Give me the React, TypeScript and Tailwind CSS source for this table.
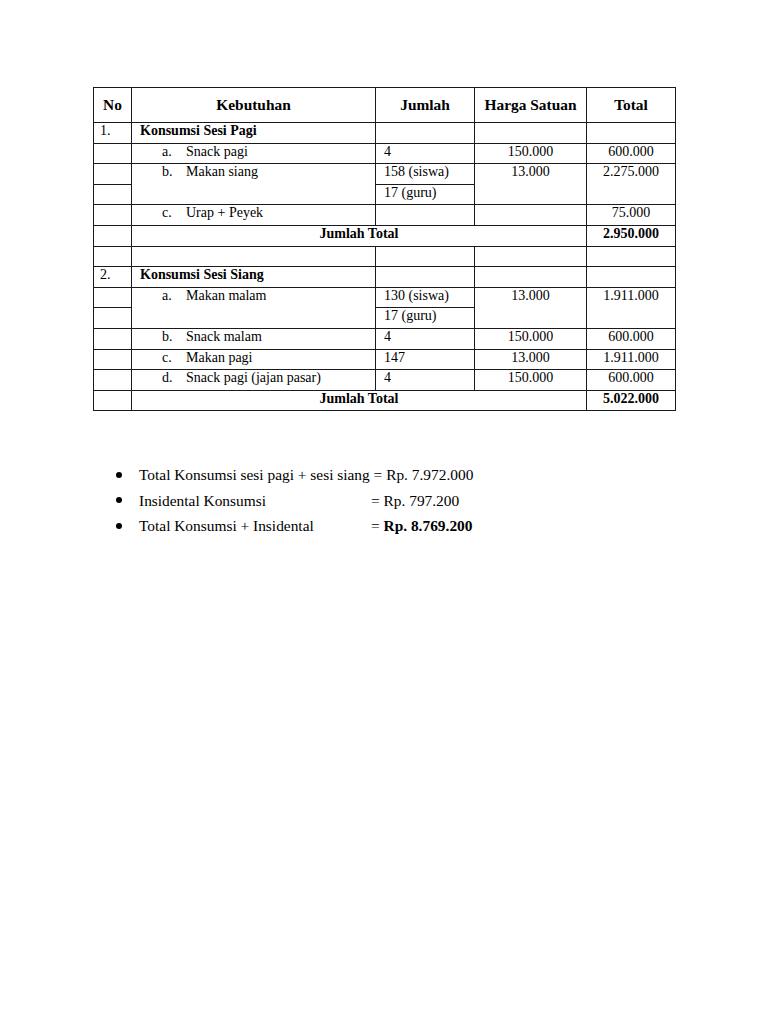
const cell = "border border-[#1a1a1a] align-top px-[6px] pt-0 leading-[15px]";

type Row = {
  no?: string;
  item?: React.ReactNode;
  itemSpan?: number;
  jumlah?: string;
  harga?: string;
  hargaSpan?: number;
  total?: string;
  totalSpan?: number;
  skipItem?: boolean;
  skipHarga?: boolean;
  skipTotal?: boolean;
  sum?: string;
};

const Sub = ({ letter, text }: { letter: string; text: string }) => (
  <span className="flex pl-[22px]">
    <span className="w-[24px]">{letter}</span>
    <span>{text}</span>
  </span>
);

const rows: Row[] = [
  { no: "1.", item: <b>Konsumsi Sesi Pagi</b> },
  { item: <Sub letter="a." text="Snack pagi" />, jumlah: "4", harga: "150.000", total: "600.000" },
  { item: <Sub letter="b." text="Makan siang" />, itemSpan: 2, jumlah: "158 (siswa)", harga: "13.000", hargaSpan: 2, total: "2.275.000", totalSpan: 2 },
  { skipItem: true, jumlah: "17 (guru)", skipHarga: true, skipTotal: true },
  { item: <Sub letter="c." text="Urap + Peyek" />, total: "75.000" },
  { sum: "2.950.000" },
  {},
  { no: "2.", item: <b>Konsumsi Sesi Siang</b> },
  { item: <Sub letter="a." text="Makan malam" />, itemSpan: 2, jumlah: "130 (siswa)", harga: "13.000", hargaSpan: 2, total: "1.911.000", totalSpan: 2 },
  { skipItem: true, jumlah: "17 (guru)", skipHarga: true, skipTotal: true },
  { item: <Sub letter="b." text="Snack malam" />, jumlah: "4", harga: "150.000", total: "600.000" },
  { item: <Sub letter="c." text="Makan pagi" />, jumlah: "147", harga: "13.000", total: "1.911.000" },
  { item: <Sub letter="d." text="Snack pagi (jajan pasar)" />, jumlah: "4", harga: "150.000", total: "600.000" },
  { sum: "5.022.000" },
];

const Bullet = ({ children }: { children: React.ReactNode }) => (
  <li className="flex items-center h-[25.4px]">
    <span className="w-[6px] h-[6px] rounded-full bg-black ml-[116px] mr-[17px]" />
    {children}
  </li>
);

export default function App() {
  return (
    <div className="w-[768px] h-[1024px] bg-white text-black" style={{ fontFamily: '"Liberation Serif", "Times New Roman", serif' }}>
      <div className="pt-[87px] pl-[93px]">
        <table className="table-fixed border-collapse text-[14px] w-[582px]">
          <colgroup>
            <col className="w-[38px]" />
            <col className="w-[244px]" />
            <col className="w-[99px]" />
            <col className="w-[112px]" />
            <col className="w-[89px]" />
          </colgroup>
          <thead>
            <tr className="h-[35px] text-[15.4px] font-bold">
              <th className="border border-[#1a1a1a] align-middle">No</th>
              <th className="border border-[#1a1a1a] align-middle">Kebutuhan</th>
              <th className="border border-[#1a1a1a] align-middle">Jumlah</th>
              <th className="border border-[#1a1a1a] align-middle">Harga Satuan</th>
              <th className="border border-[#1a1a1a] align-middle">Total</th>
            </tr>
          </thead>
          <tbody>
            {rows.map((r, i) =>
              r.sum ? (
                <tr key={i} className="h-[20.6px]">
                  <td className={cell}></td>
                  <td colSpan={3} className={`${cell} text-center font-bold`}>Jumlah Total</td>
                  <td className={`${cell} text-center font-bold`}>{r.sum}</td>
                </tr>
              ) : (
                <tr key={i} className="h-[20.6px]">
                  <td className={cell}>{r.no}</td>
                  {!r.skipItem && (
                    <td rowSpan={r.itemSpan} className={`${cell} pl-[8px]`}>{r.item}</td>
                  )}
                  <td className={`${cell} pl-[8px]`}>{r.jumlah}</td>
                  {!r.skipHarga && (
                    <td rowSpan={r.hargaSpan} className={`${cell} text-center`}>{r.harga}</td>
                  )}
                  {!r.skipTotal && (
                    <td rowSpan={r.totalSpan} className={`${cell} text-center`}>{r.total}</td>
                  )}
                </tr>
              )
            )}
          </tbody>
        </table>
      </div>

      <ul className="mt-[51px] text-[15.4px]">
        <Bullet>Total Konsumsi sesi pagi + sesi siang = Rp. 7.972.000</Bullet>
        <Bullet>
          <span className="w-[232px]">Insidental Konsumsi</span>
          <span>= Rp. 797.200</span>
        </Bullet>
        <Bullet>
          <span className="w-[232px]">Total Konsumsi + Insidental</span>
          <span>
            = <b>Rp. 8.769.200</b>
          </span>
        </Bullet>
      </ul>
    </div>
  );
}
